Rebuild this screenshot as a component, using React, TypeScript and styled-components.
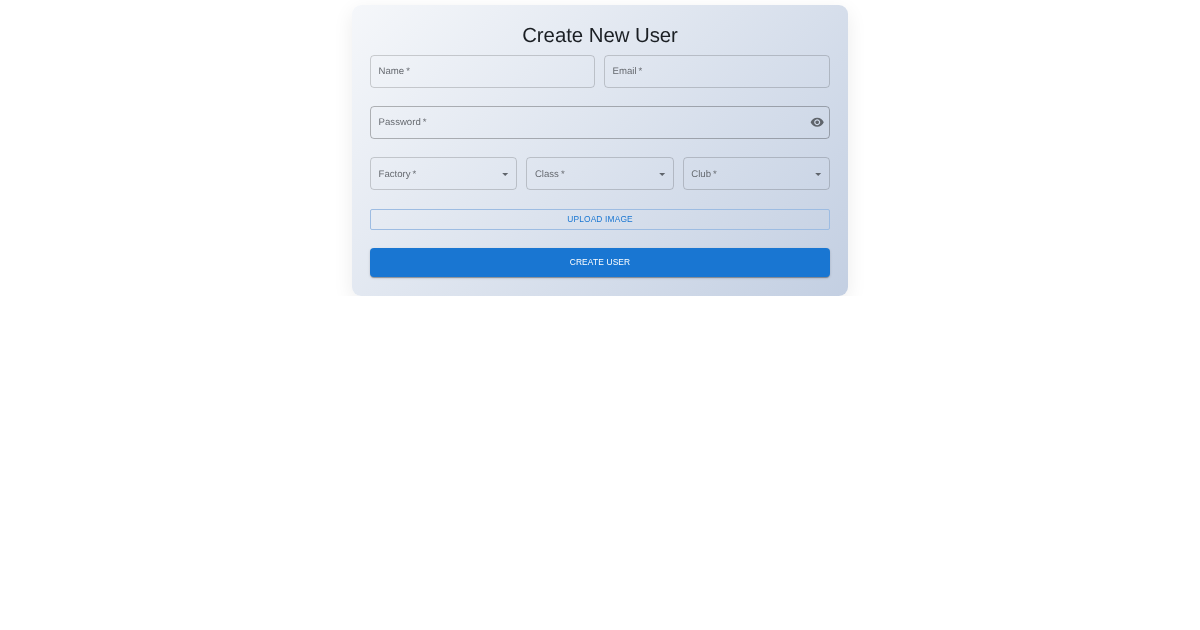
import styled, { createGlobalStyle } from "styled-components";

const GlobalStyle = createGlobalStyle`
  html, body {
    margin: 0;
    padding: 0;
    background: #ffffff;
  }
  body {
    font-family: "Liberation Sans", Arial, sans-serif;
    text-rendering: geometricPrecision;
  }
`;

const Page = styled.div`
  display: flex;
  justify-content: center;
  padding-top: 5px;
`;

const Card = styled.form`
  box-sizing: border-box;
  width: 496px;
  height: 290.5px;
  padding: 20px 18px 0;
  border-radius: 9px;
  background: linear-gradient(135deg, #f5f7fa 0%, #c3cfe2 100%);
  box-shadow: 0 6px 20px rgba(0, 0, 0, 0.08);
  will-change: transform;
`;

const Title = styled.h1`
  margin: 0 0 7px;
  font-size: 20.4px;
  line-height: 23px;
  font-weight: 400;
  letter-spacing: -0.05px;
  text-align: center;
  color: #1b1f24;
`;

const Row = styled.div<{ $template: string }>`
  display: grid;
  grid-template-columns: ${(p) => p.$template};
  gap: 9px;
  margin-bottom: 18px;
`;

const Field = styled.label<{ $strong?: boolean }>`
  box-sizing: border-box;
  height: 33px;
  display: flex;
  align-items: center;
  justify-content: space-between;
  padding: 0 5px 0 7.6px;
  border: 1px solid ${(p) => (p.$strong ? "rgba(0, 0, 0, 0.27)" : "rgba(0, 0, 0, 0.17)")};
  border-radius: 4px;
  font-size: 9.6px;
  color: #666a70;
`;

const SelectField = styled(Field)`
  padding-top: 1px;
`;

const Star = styled.span`
  margin-left: 2px;
`;

const EyeIcon = styled.svg`
  width: 14.4px;
  height: 14.4px;
  fill: #5f646b;
`;

const ArrowIcon = styled.svg`
  width: 14.4px;
  height: 14.4px;
  fill: #5f646b;
  margin-right: -1.5px;
`;

const UploadButton = styled.button`
  display: block;
  box-sizing: border-box;
  width: 100%;
  height: 21px;
  margin: 19px 0 18px;
  padding: 0 0 1px;
  border: 1px solid #9dbce2;
  border-radius: 2px;
  background: transparent;
  font-family: inherit;
  font-size: 8.4px;
  letter-spacing: 0.15px;
  color: #1976d2;
`;

const SubmitButton = styled.button`
  display: block;
  width: 100%;
  height: 29px;
  padding: 0 0 1px;
  border: none;
  border-radius: 4px;
  background: #1976d2;
  box-shadow: 0 2px 1px -1px rgba(0, 0, 0, 0.2), 0 1px 1px rgba(0, 0, 0, 0.14),
    0 1px 3px rgba(0, 0, 0, 0.12);
  font-family: inherit;
  font-size: 8.4px;
  letter-spacing: 0.15px;
  color: #ffffff;
`;

const Eye = () => (
  <EyeIcon viewBox="0 0 24 24">
    <path d="M12 4.5C7 4.5 2.73 7.61 1 12c1.73 4.39 6 7.5 11 7.5s9.27-3.11 11-7.5c-1.73-4.39-6-7.5-11-7.5zM12 17c-2.76 0-5-2.24-5-5s2.24-5 5-5 5 2.24 5 5-2.24 5-5 5zm0-8c-1.66 0-3 1.34-3 3s1.34 3 3 3 3-1.34 3-3-1.34-3-3-3z" />
  </EyeIcon>
);

const Arrow = () => (
  <ArrowIcon viewBox="0 0 24 24">
    <path d="M7 10l5 5 5-5z" />
  </ArrowIcon>
);

const Label = ({ text }: { text: string }) => (
  <span>
    {text}
    <Star>*</Star>
  </span>
);

export default function App() {
  return (
    <>
      <GlobalStyle />
      <Page>
        <Card>
          <Title>Create New User</Title>
          <Row $template="225px 1fr">
            <Field>
              <Label text="Name" />
            </Field>
            <Field>
              <Label text="Email" />
            </Field>
          </Row>
          <Row $template="1fr">
            <Field $strong>
              <Label text="Password" />
              <Eye />
            </Field>
          </Row>
          <Row $template="repeat(3, 1fr)">
            {["Factory", "Class", "Club"].map((name) => (
              <SelectField key={name}>
                <Label text={name} />
                <Arrow />
              </SelectField>
            ))}
          </Row>
          <UploadButton type="button">UPLOAD IMAGE</UploadButton>
          <SubmitButton type="button">CREATE USER</SubmitButton>
        </Card>
      </Page>
    </>
  );
}
